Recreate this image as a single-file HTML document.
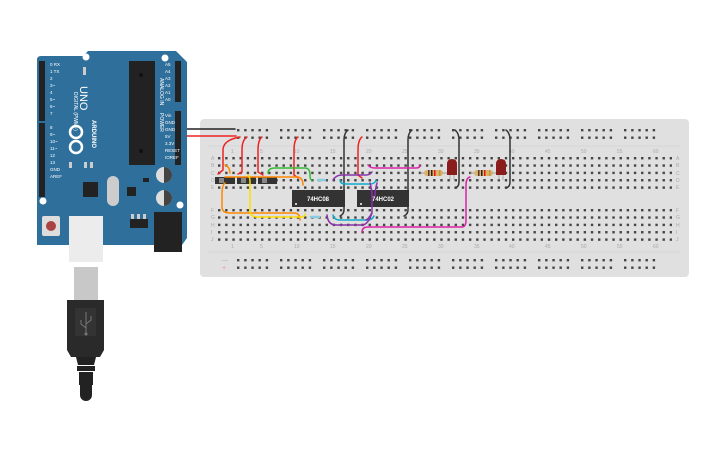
<!DOCTYPE html>
<html><head><meta charset="utf-8"><style>
html,body{margin:0;padding:0;background:#fff;width:725px;height:453px;overflow:hidden}
svg{display:block}
text{font-family:"Liberation Sans",sans-serif}
</style></head><body>
<svg width="725" height="453" viewBox="0 0 725 453" xmlns="http://www.w3.org/2000/svg">
<defs>
<pattern id="h" x="218" y="157" width="7.17" height="7.35" patternUnits="userSpaceOnUse">
<rect x="0" y="0" width="2.4" height="2.4" fill="#444"/></pattern>
<pattern id="h2" x="218" y="209" width="7.17" height="7.35" patternUnits="userSpaceOnUse">
<rect x="0" y="0" width="2.4" height="2.4" fill="#444"/></pattern>
<pattern id="r" x="237" y="129" width="43" height="7.5" patternUnits="userSpaceOnUse">
<rect x="0" y="0" width="2.4" height="2.4" fill="#444"/>
<rect x="7.17" y="0" width="2.4" height="2.4" fill="#444"/>
<rect x="14.34" y="0" width="2.4" height="2.4" fill="#444"/>
<rect x="21.5" y="0" width="2.4" height="2.4" fill="#444"/>
<rect x="28.7" y="0" width="2.4" height="2.4" fill="#444"/></pattern>
<pattern id="r2" x="237" y="259" width="43" height="7.5" patternUnits="userSpaceOnUse">
<rect x="0" y="0" width="2.4" height="2.4" fill="#444"/>
<rect x="7.17" y="0" width="2.4" height="2.4" fill="#444"/>
<rect x="14.34" y="0" width="2.4" height="2.4" fill="#444"/>
<rect x="21.5" y="0" width="2.4" height="2.4" fill="#444"/>
<rect x="28.7" y="0" width="2.4" height="2.4" fill="#444"/></pattern>
</defs>

<rect x="200" y="119" width="489" height="158" rx="4" fill="#e0e0e0"/>
<line x1="208" y1="146" x2="680" y2="146" stroke="#d6d6d6"/>
<line x1="208" y1="252" x2="680" y2="252" stroke="#d6d6d6"/>
<rect x="237" y="129" width="420" height="11" fill="url(#r)"/>
<rect x="237" y="259" width="420" height="11" fill="url(#r2)"/>
<rect x="218" y="157" width="454" height="34" fill="url(#h)"/>
<rect x="218" y="209" width="454" height="34" fill="url(#h2)"/>
<g font-size="5" fill="#aaa">
<text x="211" y="160">A</text><text x="211" y="167">B</text><text x="211" y="175">C</text><text x="211" y="182">D</text><text x="211" y="189">E</text>
<text x="211" y="212">F</text><text x="211" y="219">G</text><text x="211" y="227">H</text><text x="211" y="234">I</text><text x="211" y="241">J</text>
<text x="676" y="160">A</text><text x="676" y="167">B</text><text x="676" y="175">C</text><text x="676" y="182">D</text><text x="676" y="189">E</text>
<text x="676" y="212">F</text><text x="676" y="219">G</text><text x="676" y="227">H</text><text x="676" y="234">I</text><text x="676" y="241">J</text>
<text x="231" y="153">1</text><text x="260" y="153">5</text><text x="294" y="153">10</text><text x="330" y="153">15</text><text x="366" y="153">20</text><text x="402" y="153">25</text><text x="438" y="153">30</text><text x="474" y="153">35</text><text x="509" y="153">40</text><text x="545" y="153">45</text><text x="581" y="153">50</text><text x="617" y="153">55</text><text x="653" y="153">60</text>
<text x="231" y="248">1</text><text x="260" y="248">5</text><text x="294" y="248">10</text><text x="330" y="248">15</text><text x="366" y="248">20</text><text x="402" y="248">25</text><text x="438" y="248">30</text><text x="474" y="248">35</text><text x="509" y="248">40</text><text x="545" y="248">45</text><text x="581" y="248">50</text><text x="617" y="248">55</text><text x="653" y="248">60</text>
</g>
<text x="221" y="262" font-size="7" fill="#9bc">—</text>
<text x="222" y="270" font-size="7" fill="#e99">+</text>

<rect x="292" y="190" width="53" height="17" fill="#333"/>
<text x="318" y="201" font-size="6" fill="#fff" text-anchor="middle" font-weight="bold">74HC08</text>
<circle cx="296" cy="204" r="1" fill="#fff"/>
<rect x="357" y="190" width="52" height="17" fill="#333"/>
<text x="383" y="201" font-size="6" fill="#fff" text-anchor="middle" font-weight="bold">74HC02</text>
<circle cx="361" cy="204" r="1" fill="#fff"/>

<g fill="#333"><rect x="215" y="177" width="20" height="7"/><rect x="237" y="177" width="19" height="7"/><rect x="258" y="177" width="19" height="7"/></g>
<g fill="#888"><rect x="219" y="178" width="5" height="5"/><rect x="241" y="178" width="5" height="5"/><rect x="262" y="178" width="5" height="5"/></g>

<g fill="none" stroke-width="1.5" stroke-linecap="round">
<path d="M185 129 H235" stroke="#222"/>
<path d="M185 136 H236" stroke="#e22"/>
<path d="M240 137 Q223 140 223 150 V170 L218 174" stroke="#e22"/>
<path d="M247 137 Q242 140 242 150 V172 L238 174" stroke="#e22"/>
<path d="M262 137 Q258 140 258 150 V172 L263 175" stroke="#e22"/>
<path d="M298 137 Q294 140 294 150 V175 L298 178" stroke="#e22"/>
<path d="M362 137 Q358 140 358 150 V175 L362 178" stroke="#e22"/>
<path d="M348 130 Q344 133 344 140 V210 Q344 214 340 216" stroke="#333"/>
<path d="M412 130 Q408 133 408 140 V210 Q408 214 404 216" stroke="#333"/>
<path d="M455 130 Q459 133 459 140 V182 Q459 187 455 188" stroke="#333"/>
<path d="M506 130 Q510 133 510 140 V182 Q510 187 506 188" stroke="#333"/>
<path d="M225 165 Q230 167 230 173" stroke="#f80"/>
<path d="M225 177 H298 Q303 178 303 185" stroke="#f80"/>
<path d="M225 183 Q222 185 222 195 V207 Q222 213 230 213 H294 Q300 213 300 220" stroke="#f80"/>
<path d="M248 175 Q250 177 250 182 V210 Q250 217 257 217 H301 Q305 217 305 214" stroke="#fd0"/>
<path d="M268 173 Q268 168 275 168 H305 Q310 168 310 175 Q310 180 312 180" stroke="#3b3"/>
<path d="M318 180 H325" stroke="#8cd" stroke-width="2.5"/>
<path d="M311 217 H319" stroke="#8cd" stroke-width="2.5"/>
<path d="M333 180 Q336 175 342 175 H366 Q370 175 372 172" stroke="#83a"/>
<path d="M340 180 Q340 184 346 184 H370 Q375 184 376 180" stroke="#1ac"/>
<path d="M333 215 Q334 220 340 220 H368 Q372 220 374 216" stroke="#1ac"/>
<path d="M327 215 Q328 225 336 225 H362 Q368 225 372 213" stroke="#83a"/>
<path d="M370 183 Q372 190 372 196 V212 Q370 218 366 220" stroke="#83a"/>
<path d="M377 183 Q375 190 375 196" stroke="#83a"/>
<path d="M368 165 Q370 168 375 168 H416 Q420 168 420 165" stroke="#d2a"/>
<path d="M362 232 Q362 227 368 227 H462 Q466 227 466 220 V185 Q466 178 470 177" stroke="#d2a"/>
</g>

<line x1="420" y1="173" x2="447" y2="173" stroke="#999" stroke-width="1"/>
<rect x="424" y="170" width="19" height="6" rx="3" fill="#d9b26b"/>
<rect x="428" y="170" width="1.5" height="6" fill="#533"/><rect x="431" y="170" width="1.5" height="6" fill="#222"/><rect x="434" y="170" width="1.5" height="6" fill="#e11"/><rect x="439" y="170" width="1.5" height="6" fill="#b93"/>
<line x1="470" y1="173" x2="497" y2="173" stroke="#999" stroke-width="1"/>
<rect x="474" y="170" width="19" height="6" rx="3" fill="#d9b26b"/>
<rect x="478" y="170" width="1.5" height="6" fill="#533"/><rect x="481" y="170" width="1.5" height="6" fill="#222"/><rect x="484" y="170" width="1.5" height="6" fill="#e11"/><rect x="489" y="170" width="1.5" height="6" fill="#b93"/>
<path d="M447 175 V164 Q447 159 452 159 Q457 159 457 164 V175 Z" fill="#8a1c1c"/>
<path d="M496 175 V164 Q496 159 501 159 Q506 159 506 164 V175 Z" fill="#8a1c1c"/>
<g stroke="#999" stroke-width="0.8"><line x1="450" y1="175" x2="450" y2="180"/><line x1="454" y1="175" x2="454" y2="180"/><line x1="499" y1="175" x2="499" y2="180"/><line x1="503" y1="175" x2="503" y2="180"/></g>

<path d="M37 60 Q37 56 41 56 H83 L88 51 H176 L187 62 V238 L182 245 H37 Z" fill="#2f6f9c"/>
<rect x="39" y="61" width="6" height="60" fill="#222"/>
<rect x="39" y="123" width="6" height="74" fill="#222"/>
<rect x="175" y="61" width="6" height="41" fill="#222"/>
<rect x="175" y="111" width="6" height="54" fill="#222"/>
<rect x="129" y="61" width="26" height="104" fill="#222"/>
<circle cx="141" cy="75" r="2" fill="#111"/><circle cx="141" cy="151" r="2" fill="#111"/>
<g fill="#fff"><circle cx="86" cy="57" r="3.5"/><circle cx="165" cy="58" r="3.5"/><circle cx="43" cy="201" r="3.5"/><circle cx="180" cy="205" r="3.5"/></g>
<g font-size="4.5" fill="#fff">
<text x="50" y="66">0 RX</text><text x="50" y="73">1 TX</text><text x="50" y="80">2</text><text x="50" y="87">3~</text><text x="50" y="94">4</text><text x="50" y="101">5~</text><text x="50" y="108">6~</text><text x="50" y="115">7</text>
<text x="50" y="129">8</text><text x="50" y="136">9~</text><text x="50" y="143">10~</text><text x="50" y="150">11~</text><text x="50" y="157">12</text><text x="50" y="164">13</text><text x="50" y="171">GND</text><text x="50" y="178">AREF</text>
<text x="165" y="66">A5</text><text x="165" y="73">A4</text><text x="165" y="80">A3</text><text x="165" y="87">A2</text><text x="165" y="94">A1</text><text x="165" y="101">A0</text>
<text x="165" y="117">Vin</text><text x="165" y="124">GND</text><text x="165" y="131">GND</text><text x="165" y="138">5V</text><text x="165" y="145">3.3V</text><text x="165" y="152">RESET</text><text x="165" y="159">IOREF</text>
</g>
<text transform="translate(80,86) rotate(90)" font-size="11" fill="#fff">UNO</text>
<text transform="translate(74,92) rotate(90)" font-size="5" fill="#fff">DIGITAL (PWM~)</text>
<text transform="translate(160,78) rotate(90)" font-size="5" fill="#fff">ANALOG IN</text>
<text transform="translate(160,113) rotate(90)" font-size="5" fill="#fff">POWER</text>
<text transform="translate(92,120) rotate(90)" font-size="6" fill="#fff" font-weight="bold">ARDUINO</text>
<g fill="none" stroke="#fff" stroke-width="2.5"><circle cx="76" cy="132" r="6"/><circle cx="76" cy="147" r="6"/></g>
<g fill="#ccc"><rect x="69" y="162" width="3" height="6"/><rect x="84" y="162" width="3" height="6"/><rect x="90" y="162" width="3" height="6"/><rect x="83" y="67" width="3" height="8"/></g>
<rect x="83" y="182" width="15" height="15" fill="#222"/>
<rect x="127" y="187" width="9" height="9" fill="#222"/>
<rect x="107" y="176" width="12" height="30" rx="6" fill="#ccc"/>
<circle cx="164" cy="175" r="8" fill="#ddd"/><path d="M164 167 A8 8 0 0 1 164 183 Z" fill="#444"/>
<circle cx="164" cy="198" r="8" fill="#ddd"/><path d="M164 190 A8 8 0 0 1 164 206 Z" fill="#444"/>
<rect x="143" y="178" width="6" height="4" fill="#222"/>
<rect x="130" y="219" width="18" height="9" fill="#222"/>
<g fill="#ccc"><rect x="131" y="214" width="3" height="5"/><rect x="137" y="214" width="3" height="5"/><rect x="143" y="214" width="3" height="5"/></g>
<rect x="154" y="212" width="28" height="40" fill="#222"/>
<rect x="42" y="216" width="18" height="20" rx="2" fill="#ddd"/>
<circle cx="51" cy="226" r="5" fill="#a44"/>

<rect x="69" y="216" width="34" height="46" fill="#ececec"/>
<rect x="74" y="267" width="24" height="34" fill="#c8c8c8"/>
<path d="M67 300 H104 V350 L100 357 H71 L67 350 Z" fill="#2a2a2a"/>
<rect x="75" y="308" width="21" height="28" fill="#333"/>
<g stroke="#777" stroke-width="1" fill="none"><path d="M86 312 V334 M86 328 L81 324 V320 M86 324 L91 320 V316"/></g>
<circle cx="86" cy="334" r="1.5" fill="#777"/>
<path d="M76 357 H96 L94 365 H78 Z" fill="#222"/>
<rect x="77" y="366" width="18" height="5" fill="#222"/>
<rect x="79" y="372" width="14" height="13" fill="#222"/>
<path d="M80 385 H92 V395 A6 6 0 0 1 80 395 Z" fill="#222"/>
</svg>
</body></html>
